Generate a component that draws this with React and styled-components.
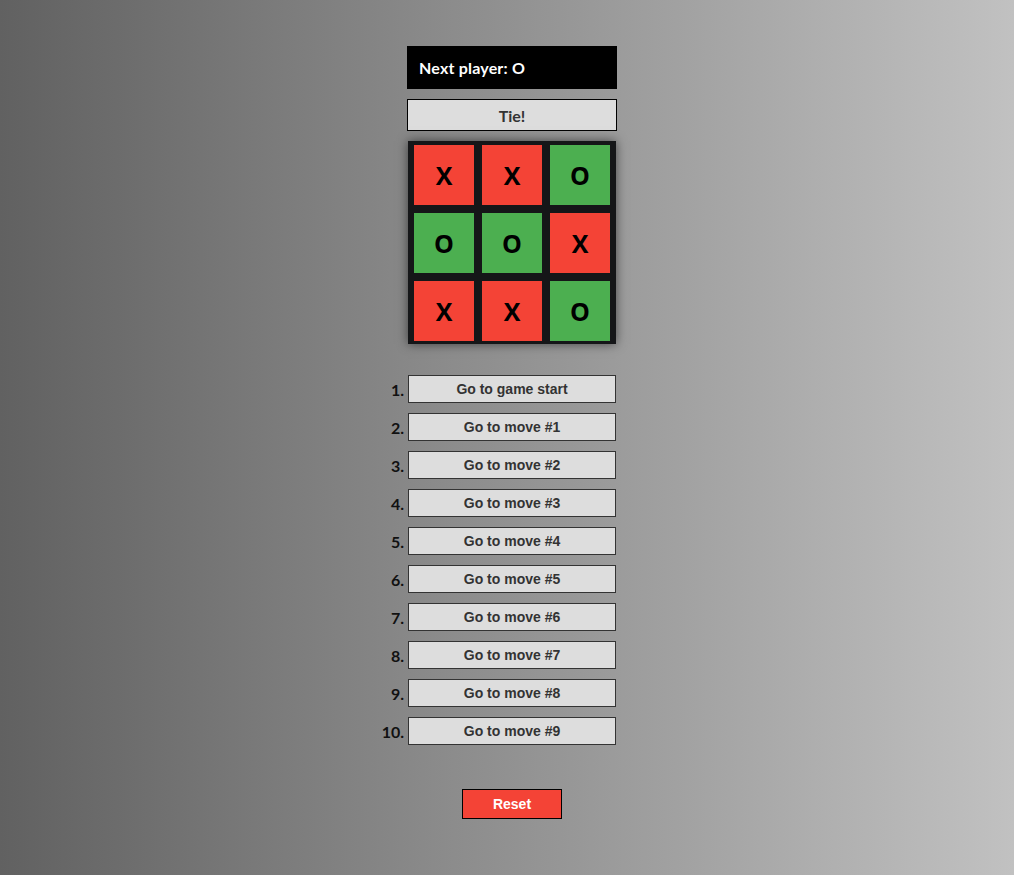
import React from "react";
import styled, { createGlobalStyle } from "styled-components";

const GlobalStyle = createGlobalStyle`
  html, body {
    margin: 0;
    padding: 0;
  }
  html {
    min-height: 100%;
    background: linear-gradient(to right, #616161, #c1c1c1) fixed;
  }
  body {
    font-family: "Open Sans", "Noto Sans", sans-serif;
  }
`;

const Page = styled.div`
  display: flex;
  flex-direction: column;
  align-items: center;
  padding: 46px 0 0 10px;
`;

const Game = styled.div`
  display: flex;
  flex-direction: column;
  width: 210px;
  gap: 10px;
`;

const Status = styled.div`
  background: #000;
  color: #fff;
  font-family: "Lato", "Open Sans", sans-serif;
  font-weight: 700;
  font-size: 16px;
  letter-spacing: 0.2px;
  height: 43px;
  display: flex;
  align-items: center;
  padding: 0 12px;
  box-sizing: border-box;
`;

const Result = styled.div`
  background: #ddd;
  border: 1px solid #000;
  color: #333;
  font-family: "Lato", "Open Sans", sans-serif;
  font-weight: 700;
  font-size: 16px;
  height: 32px;
  box-sizing: border-box;
  display: flex;
  align-items: center;
  justify-content: center;
`;

const Board = styled.div`
  align-self: center;
  display: grid;
  grid-template-columns: repeat(3, 60px);
  grid-auto-rows: 60px;
  gap: 8px;
  padding: 4px 6px 3px 6px;
  background: #151618;
  box-shadow: 0 0 10px rgba(0, 0, 0, 0.55);
`;

const Square = styled.button`
  border: none;
  margin: 0;
  padding: 0;
  background: ${(p) => (p.$mark === "X" ? "#f44336" : "#4caf50")};
  color: #000;
  font-family: "Open Sans", sans-serif;
  font-weight: 700;
  font-size: 25px;
  display: flex;
  align-items: center;
  justify-content: center;
  cursor: pointer;
`;

const Moves = styled.ol`
  list-style: none;
  margin: 31px 0 0 0;
  padding: 0;
  display: flex;
  flex-direction: column;
  gap: 10px;
`;

const MoveRow = styled.li`
  position: relative;
  display: flex;
  align-items: center;
`;

const MoveNum = styled.span`
  position: absolute;
  right: 100%;
  margin-right: 4px;
  white-space: nowrap;
  font-family: "Lato", "Open Sans", sans-serif;
  font-weight: 700;
  font-size: 16px;
  color: #111;
`;

const MoveButton = styled.button`
  width: 208px;
  height: 28px;
  box-sizing: border-box;
  background: #ddd;
  border: 1px solid #333;
  color: #333;
  font-family: "Liberation Sans", Arial, sans-serif;
  font-weight: 700;
  font-size: 14px;
  cursor: pointer;
  padding: 0;
`;

const ResetButton = styled.button`
  margin-top: 44px;
  width: 100px;
  height: 30px;
  box-sizing: border-box;
  background: #f44336;
  border: 1px solid #000;
  color: #fff;
  font-family: "Liberation Sans", Arial, sans-serif;
  font-weight: 700;
  font-size: 14px;
  cursor: pointer;
`;

const squares = ["X", "X", "O", "O", "O", "X", "X", "X", "O"];

export default function App() {
  const moves = Array.from({ length: 10 }, (_, i) =>
    i === 0 ? "Go to game start" : `Go to move #${i}`
  );

  return (
    <>
      <GlobalStyle />
      <Page>
        <Game>
          <Status>Next player: O</Status>
          <Result>Tie!</Result>
          <Board>
            {squares.map((s, i) => (
              <Square key={i} $mark={s}>
                {s}
              </Square>
            ))}
          </Board>
        </Game>
        <Moves>
          {moves.map((m, i) => (
            <MoveRow key={i}>
              <MoveNum>{i + 1}.</MoveNum>
              <MoveButton>{m}</MoveButton>
            </MoveRow>
          ))}
        </Moves>
        <ResetButton>Reset</ResetButton>
      </Page>
    </>
  );
}
